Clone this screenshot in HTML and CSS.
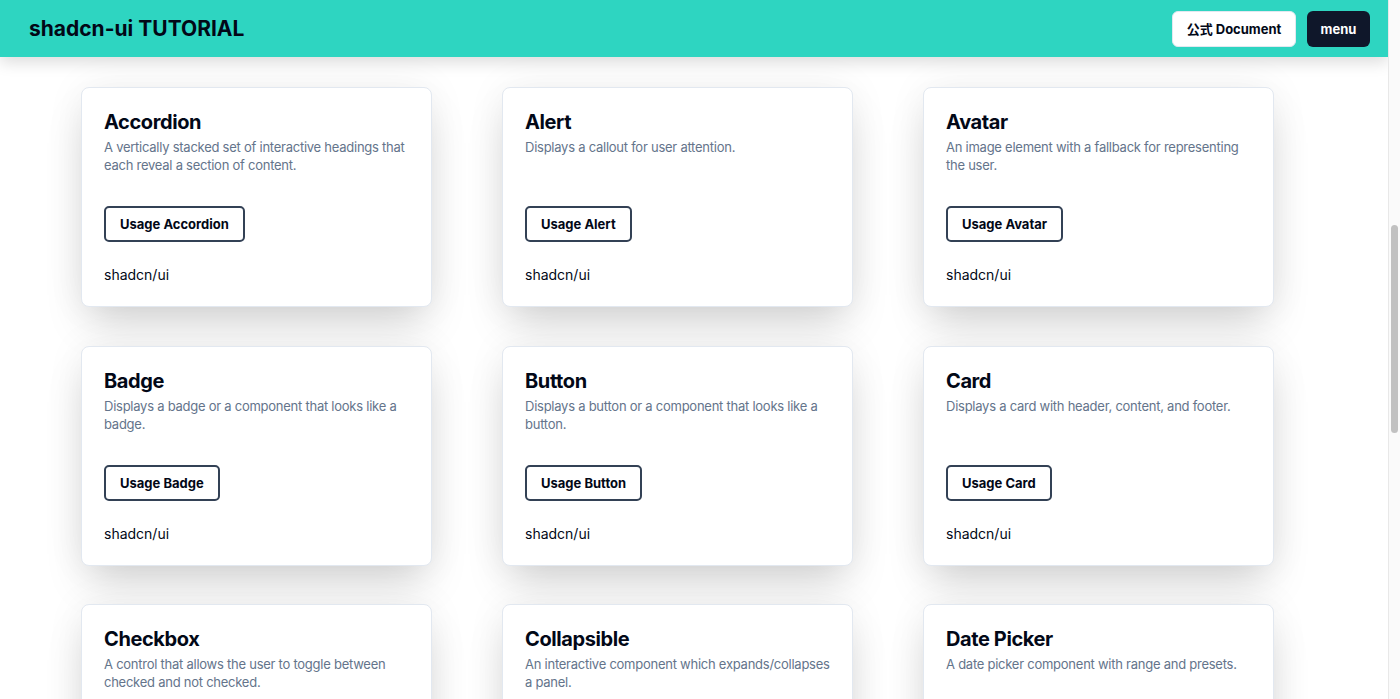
FILE: index.html
```html
<!DOCTYPE html>
<html>
<head>
  <title>shadcn-ui TUTORIAL</title>
  <link rel="stylesheet" href="styles.css">
</head>
<body>
  <div class="app">
    <div class="main">
      <header class="header">
        <h1 class="logo">shadcn-ui TUTORIAL</h1>
        <div class="header-actions">
          <button class="btn btn-light">公式 Document</button>
          <button class="btn btn-dark">menu</button>
        </div>
      </header>

      <main class="content">
        <div class="grid">
          <div class="card">
            <h2 class="card-title">Accordion</h2>
            <p class="card-desc">A vertically stacked set of interactive headings that each reveal a section of content.</p>
            <button class="btn-outline">Usage Accordion</button>
            <p class="card-foot">shadcn/ui</p>
          </div>
          <div class="card">
            <h2 class="card-title">Alert</h2>
            <p class="card-desc">Displays a callout for user attention.</p>
            <button class="btn-outline">Usage Alert</button>
            <p class="card-foot">shadcn/ui</p>
          </div>
          <div class="card">
            <h2 class="card-title">Avatar</h2>
            <p class="card-desc">An image element with a fallback for representing the user.</p>
            <button class="btn-outline">Usage Avatar</button>
            <p class="card-foot">shadcn/ui</p>
          </div>
          <div class="card">
            <h2 class="card-title">Badge</h2>
            <p class="card-desc">Displays a badge or a component that looks like a badge.</p>
            <button class="btn-outline">Usage Badge</button>
            <p class="card-foot">shadcn/ui</p>
          </div>
          <div class="card">
            <h2 class="card-title">Button</h2>
            <p class="card-desc">Displays a button or a component that looks like a button.</p>
            <button class="btn-outline">Usage Button</button>
            <p class="card-foot">shadcn/ui</p>
          </div>
          <div class="card">
            <h2 class="card-title">Card</h2>
            <p class="card-desc">Displays a card with header, content, and footer.</p>
            <button class="btn-outline">Usage Card</button>
            <p class="card-foot">shadcn/ui</p>
          </div>
          <div class="card">
            <h2 class="card-title">Checkbox</h2>
            <p class="card-desc">A control that allows the user to toggle between checked and not checked.</p>
          </div>
          <div class="card">
            <h2 class="card-title">Collapsible</h2>
            <p class="card-desc">An interactive component which expands/collapses a panel.</p>
          </div>
          <div class="card">
            <h2 class="card-title">Date Picker</h2>
            <p class="card-desc">A date picker component with range and presets.</p>
          </div>
        </div>
      </main>
    </div>

    <div class="scrollbar">
      <div class="scrollbar-thumb"></div>
    </div>
  </div>
</body>
</html>
```

FILE: styles.css
```css
* {
    box-sizing: border-box;
}

body {
    margin: 0;
    font-family: Inter, "Noto Sans CJK JP", sans-serif;
    color: #020817;
    background: #ffffff;
    height: 699px;
    overflow: hidden;
}

.app {
    display: flex;
    height: 699px;
}

.main {
    flex: 1;
    height: 699px;
    overflow: hidden;
    display: flex;
    flex-direction: column;
}

.header {
    height: 57px;
    flex-shrink: 0;
    background-color: #2ed5c1;
    display: flex;
    align-items: center;
    justify-content: space-between;
    padding: 0 18px 0 29px;
    box-shadow: 0 6px 14px rgba(0, 0, 0, 0.13);
    position: relative;
    z-index: 2;
}

.logo {
    margin: 0;
    font-size: 21px;
    font-weight: 700;
    color: #020817;
}

.header-actions {
    display: flex;
    gap: 11px;
}

.btn {
    height: 36px;
    padding: 0 15px;
    font-family: Inter, "Noto Sans CJK JP", sans-serif;
    font-size: 13px;
    font-weight: 700;
    border-radius: 6px;
    border: 1px solid transparent;
    cursor: pointer;
}

.btn-light {
    background: #ffffff;
    color: #020817;
    border-color: #e2e8f0;
    width: 124px;
    padding: 0;
}

.btn-dark {
    background: #0f172a;
    color: #ffffff;
    width: 63px;
    padding: 0;
}

.content {
    padding: 30px 0 0 81px;
}

.grid {
    display: grid;
    grid-template-columns: repeat(3, 351px);
    column-gap: 70px;
    row-gap: 38.5px;
}

.card {
    height: 220px;
    background: #ffffff;
    border: 1px solid #e2e8f0;
    border-radius: 8px;
    padding: 20px 19px 22px 22px;
    box-shadow: 0 22px 40px -8px rgba(0, 0, 0, 0.17), 0 0 40px rgba(0, 0, 0, 0.06);
}

.card-title {
    margin: 0;
    font-size: 20px;
    line-height: 28px;
    font-weight: 700;
    letter-spacing: -0.4px;
    color: #020817;
}

.card-desc {
    margin: 2px 0 0;
    min-height: 36px;
    font-size: 13px;
    line-height: 18px;
    letter-spacing: -0.25px;
    color: #64748b;
}

.btn-outline {
    margin-top: 32px;
    height: 36px;
    padding: 0 14px;
    background: #ffffff;
    border: 2px solid #334155;
    border-radius: 5px;
    font-family: Inter, sans-serif;
    font-size: 13px;
    font-weight: 700;
    color: #020817;
    cursor: pointer;
}

.card-foot {
    margin: 22px 0 0;
    font-size: 14px;
    line-height: 22px;
    color: #020817;
}

.scrollbar {
    width: 12px;
    flex-shrink: 0;
    background: #fafafa;
    border-left: 1px solid #e8e8e8;
    padding: 225px 0 0 2px;
}

.scrollbar-thumb {
    width: 7px;
    height: 208px;
    border-radius: 4px;
    background: #c1c1c1;
}
```
